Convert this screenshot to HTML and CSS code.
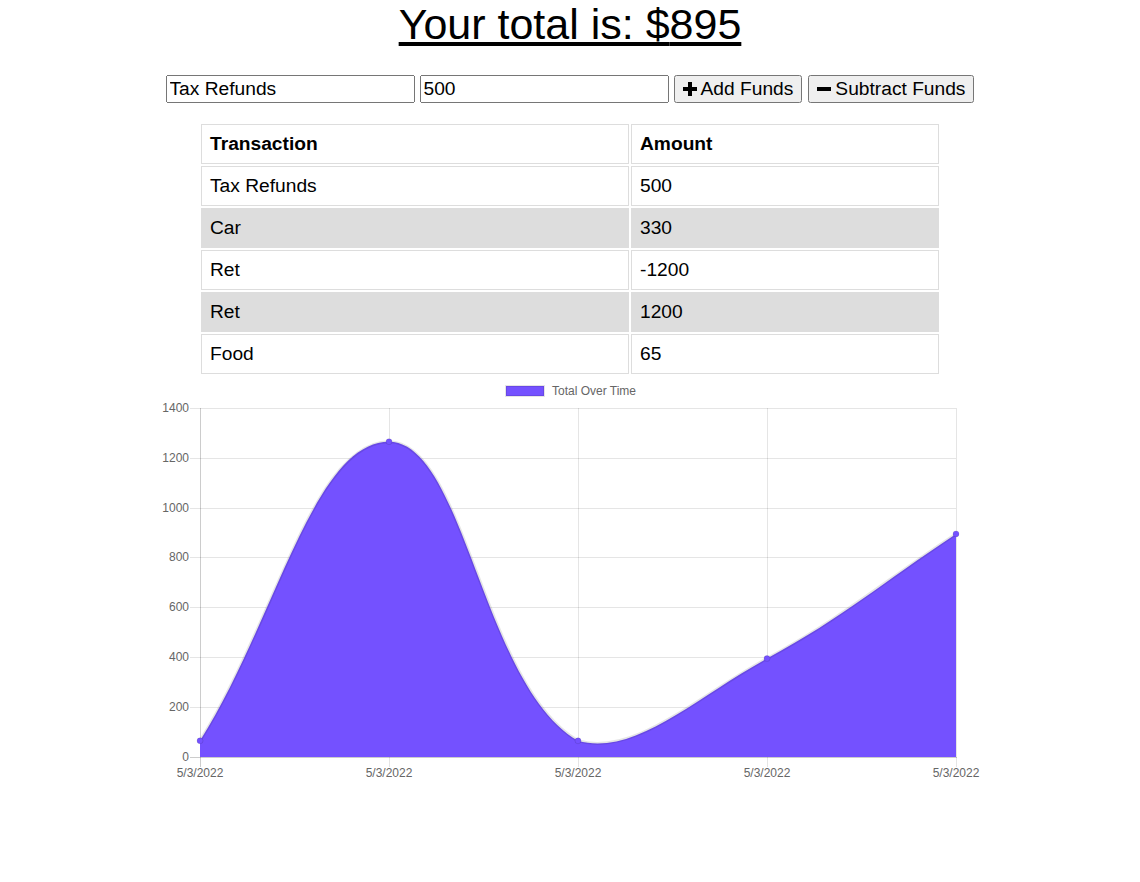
FILE: index.html
```html
<!DOCTYPE html>
<html lang="en">
<head>
  <meta charset="UTF-8">
  <meta name="viewport" content="width=device-width, initial-scale=1.0">
  <title>Budget Tracker</title>
  <link rel="stylesheet" href="styles.css">
</head>
<body>
<h1 class="total">Your total is: $<span id="total">895</span></h1>

<div class="form">
  <input type="text" id="t-name" class="field" value="Tax Refunds">
  <input type="number" id="t-amount" class="field" value="500">
  <button id="add-btn" class="btn">
    <svg class="icon" viewBox="0 0 14 14"><rect x="5" y="0" width="4" height="14"/><rect x="0" y="5" width="14" height="4"/></svg>Add Funds
  </button>
  <button id="sub-btn" class="btn">
    <svg class="icon" viewBox="0 0 14 14"><rect x="0" y="5" width="14" height="4"/></svg>Subtract Funds
  </button>
</div>

<table class="transactions">
  <thead>
    <tr>
      <th class="col-name">Transaction</th>
      <th>Amount</th>
    </tr>
  </thead>
  <tbody id="tbody">
    <tr><td>Tax Refunds</td><td>500</td></tr>
    <tr><td>Car</td><td>330</td></tr>
    <tr><td>Ret</td><td>-1200</td></tr>
    <tr><td>Ret</td><td>1200</td></tr>
    <tr><td>Food</td><td>65</td></tr>
  </tbody>
</table>

<div class="chart-wrap">
  <svg class="chart" width="820" height="422" viewBox="160 378 820 422">
    <!-- legend -->
    <rect x="506" y="386" width="38" height="10" fill="#7451ff" stroke="rgba(0,0,0,0.1)" stroke-width="2"/>
    <text x="552" y="395" class="legend">Total Over Time</text>

    <!-- grid -->
    <g stroke="rgba(0,0,0,0.1)" stroke-width="1">
      <line x1="190" y1="408.5" x2="956" y2="408.5"/>
      <line x1="190" y1="458.5" x2="956" y2="458.5"/>
      <line x1="190" y1="508.5" x2="956" y2="508.5"/>
      <line x1="190" y1="557.5" x2="956" y2="557.5"/>
      <line x1="190" y1="607.5" x2="956" y2="607.5"/>
      <line x1="190" y1="657.5" x2="956" y2="657.5"/>
      <line x1="190" y1="707.5" x2="956" y2="707.5"/>
      <line x1="389.5" y1="408" x2="389.5" y2="767"/>
      <line x1="578.5" y1="408" x2="578.5" y2="767"/>
      <line x1="767.5" y1="408" x2="767.5" y2="767"/>
      <line x1="956.5" y1="408" x2="956.5" y2="767"/>
    </g>
    <g stroke="rgba(0,0,0,0.2)" stroke-width="1">
      <line x1="190" y1="757.5" x2="957" y2="757.5"/>
      <line x1="200.5" y1="408" x2="200.5" y2="767"/>
    </g>

    <!-- area -->
    <path d="M200,740.8 C275.6,621.1 313.4,441.7 389,441.7 C464.6,441.7 482.5,686 578,740.8 C633.7,757 694.9,698 767,658.5 C846.1,615.2 880.4,583.8 956,533.9 L956,757 L200,757 Z"
          fill="#7451ff"/>
    <path d="M200,740.8 C275.6,621.1 313.4,441.7 389,441.7 C464.6,441.7 482.5,686 578,740.8 C633.7,757 694.9,698 767,658.5 C846.1,615.2 880.4,583.8 956,533.9"
          fill="none" stroke="rgba(0,0,0,0.1)" stroke-width="3"/>

    <!-- points -->
    <g fill="#7451ff" stroke="rgba(0,0,0,0.1)" stroke-width="1">
      <circle cx="200" cy="740.8" r="3"/>
      <circle cx="389" cy="441.7" r="3"/>
      <circle cx="578" cy="740.8" r="3"/>
      <circle cx="767" cy="658.5" r="3"/>
      <circle cx="956" cy="533.9" r="3"/>
    </g>

    <!-- y ticks -->
    <g class="tick-y">
      <text x="189" y="412">1400</text>
      <text x="189" y="462">1200</text>
      <text x="189" y="512">1000</text>
      <text x="189" y="561">800</text>
      <text x="189" y="611">600</text>
      <text x="189" y="661">400</text>
      <text x="189" y="711">200</text>
      <text x="189" y="761">0</text>
    </g>

    <!-- x ticks -->
    <g class="tick-x">
      <text x="200" y="777">5/3/2022</text>
      <text x="389" y="777">5/3/2022</text>
      <text x="578" y="777">5/3/2022</text>
      <text x="767" y="777">5/3/2022</text>
      <text x="956" y="777">5/3/2022</text>
    </g>
  </svg>
</div>
</body>
</html>
```

FILE: styles.css
```css
body {
  margin: 0;
  font-family: "Liberation Sans", Arial, sans-serif;
  font-size: 19.2px;
  color: #000;
  background: #fff;
}

.total {
  margin: 0 0 27px;
  text-align: center;
  font-size: 43px;
  line-height: 48px;
  font-weight: normal;
  text-decoration: underline;
}

.form {
  display: flex;
  justify-content: center;
  gap: 5px;
}

.field {
  box-sizing: border-box;
  width: 249px;
  height: 28px;
  font: inherit;
  padding: 1px 2px;
  margin: 0;
}

.btn {
  font: inherit;
  height: 28px;
  margin: 0;
  padding: 1px 7px;
  display: flex;
  align-items: center;
}

.btn + .btn { margin-left: 1px; }

.icon {
  width: 14px;
  height: 14px;
  margin-right: 4px;
  fill: #000;
}

.transactions {
  width: 742px;
  margin: 19px auto 0;
  border-spacing: 2px;
}

.transactions th,
.transactions td {
  border: 1px solid #ddd;
  padding: 8px;
  text-align: left;
  line-height: 22px;
}

.transactions .col-name { width: 410px; }

.transactions tbody tr:nth-child(even) { background-color: #ddd; }

.chart-wrap {
  display: flex;
  justify-content: center;
  margin-top: 2px;
}

.chart {
  display: block;
  font-family: "Liberation Sans", Arial, sans-serif;
  font-size: 12px;
}

.chart text { fill: #666; }

.tick-y text { text-anchor: end; }

.tick-x text { text-anchor: middle; }
```
